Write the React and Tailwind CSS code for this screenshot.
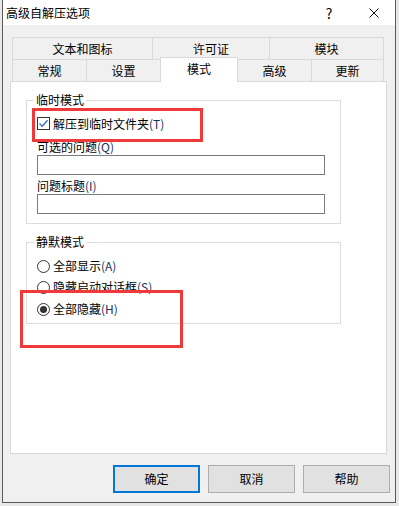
import React from "react";

const font = "font-['Noto_Sans_CJK_SC','Noto_Sans',sans-serif]";

const Key = ({ children }) => <span className="text-[#1d2f5c]">{children}</span>;

const Tab = ({ label, w, last, noLeft }) => (
  <div
    className={`${w} h-full flex items-center justify-center border-t border-[#d9d9d9] ${noLeft ? "" : "border-l"} ${last ? "border-r" : ""}`}
  >
    {label}
  </div>
);

const Radio = ({ checked, children, className = "" }) => (
  <div className={`flex items-center h-[16px] ${className}`}>
    <span className="w-[13px] h-[13px] rounded-full border border-[#333] flex items-center justify-center bg-white">
      {checked && <span className="w-[7px] h-[7px] rounded-full bg-[#333]" />}
    </span>
    <span className="ml-[3px] leading-[16px]">{children}</span>
  </div>
);

const Group = ({ title, className, children }) => (
  <div className={`relative ml-[15px] w-[315px] border border-[#dcdcdc] ${className}`}>
    <span className="absolute -top-[9px] left-[7px] px-[2px] bg-white leading-[16px]">{title}</span>
    {children}
  </div>
);

export default function App() {
  return (
    <div className={`relative w-[399px] h-[506px] overflow-hidden bg-[#e8e8e8] text-[12px] text-black ${font}`}>
      <div className="ml-[2px] w-[394px] h-[503px] border-x border-b border-[#5a5a5a] bg-[#f0f0f0] flex flex-col">
        {/* title bar */}
        <div className="h-[25px] bg-white flex items-center pl-[3px] pr-[16px]">
          <span className="leading-[16px]">高级自解压选项</span>
          <span className="ml-auto w-[14px] text-center text-[14px] leading-[16px]">?</span>
          <svg className="ml-[33px]" width="10" height="10" viewBox="0 0 10 10">
            <path d="M0.5 0.5 L9.5 9.5 M9.5 0.5 L0.5 9.5" stroke="#111" strokeWidth="1" />
          </svg>
        </div>

        {/* tabs */}
        <div className="mt-[12px] ml-[9px] w-[372px]">
          <div className="flex h-[22px]">
            <Tab label="文本和图标" w="w-[140px]" />
            <Tab label="许可证" w="w-[117px]" />
            <Tab label="模块" w="w-[115px]" last />
          </div>
          <div className="flex items-end h-[22px]">
            <Tab label="常规" w="w-[74px]" />
            <Tab label="设置" w="w-[74px]" />
            <div className="relative z-10 w-[78px] h-[25px] -mb-[1px] bg-white border-t border-x border-[#d9d9d9] flex justify-center pt-[2px]">
              模式
            </div>
            <Tab label="高级" w="w-[73px]" noLeft />
            <Tab label="更新" w="w-[73px]" last />
          </div>
        </div>

        {/* panel */}
        <div className="ml-[7px] w-[377px] h-[373px] bg-white border border-[#d9d9d9] flex flex-col">
          <Group title="临时模式" className="mt-[18px] h-[124px]">
            <div className="pl-[10px] pt-[16px] flex flex-col">
              <div className="flex items-center h-[13px]">
                <span className="w-[13px] h-[13px] border border-[#333] flex items-center justify-center">
                  <svg width="11" height="11" viewBox="0 0 11 11">
                    <path d="M1.5 5.5 L4.2 8.3 L9.6 2.2" fill="none" stroke="#2b6fc9" strokeWidth="1.3" />
                  </svg>
                </span>
                <span className="ml-[3px] leading-[16px]">
                  解压到临时文件夹<Key>(T)</Key>
                </span>
              </div>
              <span className="mt-[9px] leading-[16px]">
                可选的问题<Key>(Q)</Key>
              </span>
              <div className="w-[288px] h-[20px] border border-[#7a7a7a] bg-white" />
              <span className="mt-[3px] leading-[16px]">
                问题标题<Key>(I)</Key>
              </span>
              <div className="w-[288px] h-[20px] border border-[#7a7a7a] bg-white" />
            </div>
          </Group>

          <Group title="静默模式" className="mt-[18px] h-[82px]">
            <div className="pl-[10px] pt-[15px] flex flex-col">
              <Radio>
                全部显示<Key>(A)</Key>
              </Radio>
              <Radio className="mt-[5px]">
                隐藏启动对话框<Key>(S)</Key>
              </Radio>
              <Radio checked className="mt-[6px]">
                全部隐藏<Key>(H)</Key>
              </Radio>
            </div>
          </Group>
        </div>

        {/* buttons */}
        <div className="mt-[11px] pr-[5px] flex justify-end gap-[8px]">
          <button className="w-[87px] h-[28px] border-2 border-[#0078d7] bg-[#e1e1e1]">确定</button>
          <button className="w-[87px] h-[28px] border border-[#adadad] bg-[#e1e1e1]">取消</button>
          <button className="w-[87px] h-[28px] border border-[#adadad] bg-[#e1e1e1]">帮助</button>
        </div>
      </div>

      {/* annotation boxes */}
      <div className="absolute left-[32px] top-[108px] w-[171px] h-[34px] border-[3px] border-[#f03a3a]" />
      <div className="absolute left-[20px] top-[290px] w-[163px] h-[58px] border-[3px] border-[#f03a3a]" />
    </div>
  );
}
